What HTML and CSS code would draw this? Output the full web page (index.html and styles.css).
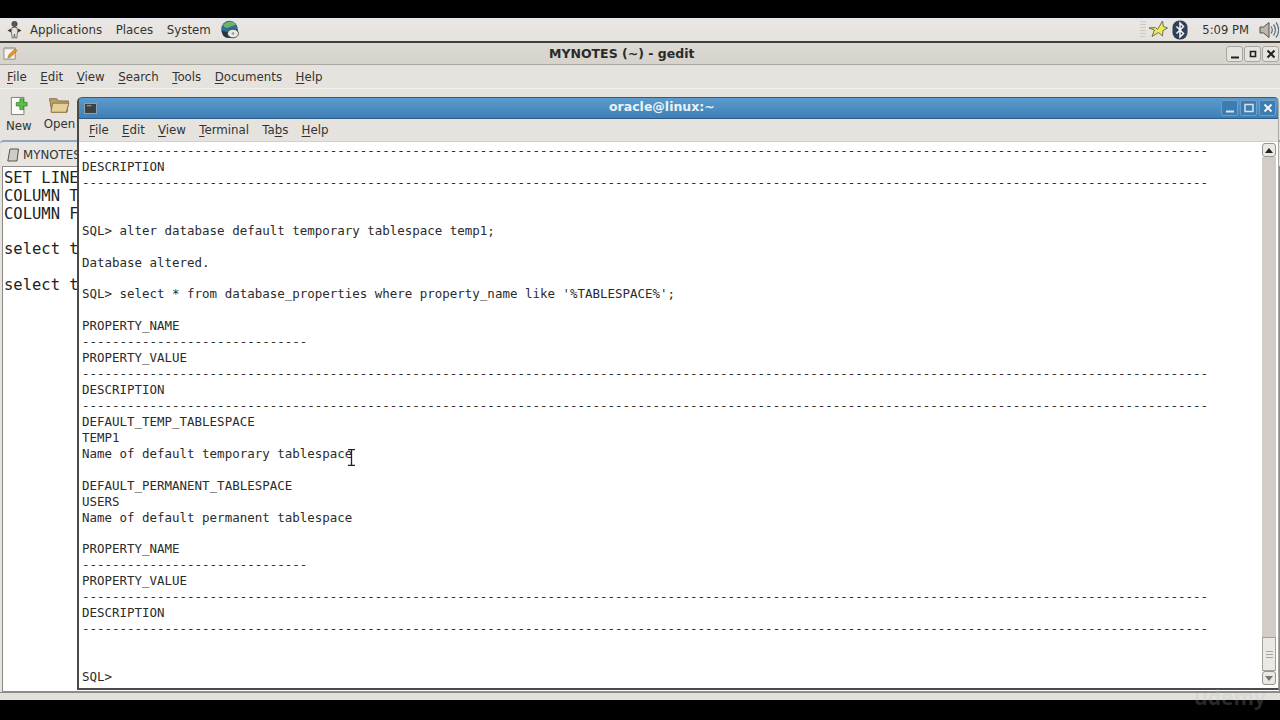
FILE: index.html
```html
<!DOCTYPE html>
<html lang="en">
<head>
<meta charset="utf-8">
<title>MYNOTES (~) - gedit</title>
<link rel="stylesheet" href="styles.css">
</head>
<body>
<div class="screen">
  <div class="letterbox-top"></div>
  <header class="panel">
    <svg class="logo" viewBox="0 0 15 18" width="15" height="18"><circle cx="7.500" cy="3" r="2.700" fill="#5a5750" stroke="#2d2c29" stroke-width=".6"/><path d="M5 6.500h5l.6 4-.8 6.500H8.200L7.500 13l-.7 4H5.200l-.8-6.500z" fill="#e4e1da" stroke="#4c4a45" stroke-width=".7"/><path d="M.5 9.500L4 7.500v4zM14.500 9.500L11 7.500v4z" fill="#3d3b37"/></svg>
    <nav class="panel-menu"><span>Applications</span><span>Places</span><span>System</span></nav>
    <svg class="globe" viewBox="0 0 20 20" width="20" height="20"><circle cx="9.500" cy="9" r="8.300" fill="#2f6f93"/><path d="M3 5c3-3.500 9-4.500 13-1.500-1 2.500-4 2-6 3.500C7.500 8.500 4.500 8 3 5z" fill="#6fb26a"/><path d="M1.500 10c4 3 10 3 16-1l.5 3c-1 4-4 6-9 6s-7-3-7.500-8z" fill="#29343b"/><ellipse cx="13" cy="13.500" rx="5.500" ry="4.300" fill="#e8e8e4" stroke="#3a3a3a" stroke-width=".8"/><circle cx="13" cy="13.500" r="1.300" fill="#9a9a96"/></svg>
    <div class="panel-spacer"></div>
    <div class="tray">
      <div class="tray-grip"></div>
      <svg viewBox="0 0 20 20" width="20" height="20"><path d="M14.500 1l.8 5.500 4.200 1.500-4.500 2.500-.5 5.500-4-3.500-6.500 4 2.500-6.500L1 8l6.500-.5 2 2z" fill="#ecec58" stroke="#6f6e4c" stroke-width="1"/></svg>
      <svg class="bt" viewBox="0 0 16 20" width="16" height="20"><rect x=".5" y=".5" width="15" height="19" rx="7" fill="#323f59"/><path d="M4.500 6.500l7 7-3.500 3.500V3l3.500 3.500-7 7" fill="none" stroke="#f4f6fa" stroke-width="1.500"/></svg>
      <span class="clock">5:09 PM</span>
      <svg class="speaker" viewBox="0 0 20 18" width="20" height="18"><path d="M1 6h3.500L10 1.500v15L4.500 12H1z" fill="#b9b7ae" stroke="#55534e" stroke-width="1"/><path d="M12 5.500c1.500 2 1.500 5 0 7M14.500 3.500c2.500 3 2.500 8 0 11M17 1.500c3.500 4 3.500 11 0 15" fill="none" stroke="#5d6c80" stroke-width="1.200"/></svg>
    </div>
  </header>
  <main class="desktop">
    <section class="gedit">
      <div class="gedit-title">
        <svg class="gedit-icon" viewBox="0 0 16 16" width="15" height="15"><path d="M1 2h12v12H1z" fill="#f7f5ec" stroke="#8a8880"/><path d="M1 1.500h12v2H1z" fill="#b4b2ac"/><path d="M5 13l1.500-4L13 3l2 2-6.500 6.500z" fill="#e8962a" stroke="#8a5a16" stroke-width=".5"/></svg>
        <h1>MYNOTES (~) - gedit</h1>
        <div class="win-buttons plain">
          <span class="wbtn"><svg viewBox="0 0 10 10" width="10" height="10"><path d="M1 8.500h8" stroke="#222" stroke-width="2"/></svg></span>
          <span class="wbtn"><svg viewBox="0 0 10 10" width="10" height="10"><path d="M2.500 2.500h5v5h-5z" fill="none" stroke="#222" stroke-width="1.600"/></svg></span>
          <span class="wbtn"><svg viewBox="0 0 10 10" width="10" height="10"><path d="M1.500 1.500l7 7M8.500 1.500l-7 7" stroke="#222" stroke-width="2"/></svg></span>
        </div>
      </div>
      <nav class="menubar gedit-menu">
        <span><u>F</u>ile</span><span><u>E</u>dit</span><span><u>V</u>iew</span><span><u>S</u>earch</span><span><u>T</u>ools</span><span><u>D</u>ocuments</span><span><u>H</u>elp</span>
      </nav>
      <div class="toolbar">
        <div class="tool"><svg viewBox="0 0 20 22" width="18" height="20"><path d="M1.500 1.500h14v19h-14z" fill="#fbfbf8" stroke="#77756d"/><path d="M11 3h4v4h4v4h-4v4h-4v-4H7V7h4z" fill="#57c24a" stroke="#2d7a22" stroke-width=".8"/></svg><span>New</span></div>
        <div class="tool"><svg viewBox="0 0 24 20" width="22" height="18"><path d="M1.500 3h8l2 2.500h11L21 18H4z" fill="#b99f67" stroke="#7d6c48"/><path d="M5 8h18l-3 10H3z" fill="#e6cf97" stroke="#8a7446"/></svg><span>Open</span></div>
      </div>
      <div class="tabs"><div class="tab"><svg viewBox="0 0 12 14" width="12" height="14"><path d="M3 1h8.500l-1.500 12H.8z" fill="#cfcdc6" stroke="#55534d"/></svg><span>MYNOTES</span></div></div>
      <pre class="doc">SET LINE
COLUMN T
COLUMN F

select t

select t</pre>
    </section>

    <section class="terminal">
      <div class="term-title">
        <svg class="term-icon" viewBox="0 0 14 12" width="13" height="11"><rect x=".5" y=".5" width="13" height="11" fill="#3e4142" stroke="#9aa6ae"/><path d="M3 3h5" stroke="#9c9" stroke-width="1"/></svg>
        <h2>oracle@linux:~</h2>
        <div class="win-buttons blue">
          <span class="wbtn"><svg viewBox="0 0 10 10" width="10" height="10"><path d="M1 8.500h8" stroke="#d6e4f0" stroke-width="2"/></svg></span>
          <span class="wbtn"><svg viewBox="0 0 10 10" width="10" height="10"><path d="M1 1.500h8v7H1z" fill="none" stroke="#d6e4f0" stroke-width="1.500"/></svg></span>
          <span class="wbtn"><svg viewBox="0 0 10 10" width="10" height="10"><path d="M1.500 1.500l7 7M8.500 1.500l-7 7" stroke="#eef4f9" stroke-width="2"/></svg></span>
        </div>
      </div>
      <nav class="menubar term-menu">
        <span><u>F</u>ile</span><span><u>E</u>dit</span><span><u>V</u>iew</span><span><u>T</u>erminal</span><span>Ta<u>b</u>s</span><span><u>H</u>elp</span>
      </nav>
      <div class="term-body">
        <pre class="term-text">------------------------------------------------------------------------------------------------------------------------------------------------------
DESCRIPTION
------------------------------------------------------------------------------------------------------------------------------------------------------


SQL&gt; alter database default temporary tablespace temp1;

Database altered.

SQL&gt; select * from database_properties where property_name like '%TABLESPACE%';

PROPERTY_NAME
------------------------------
PROPERTY_VALUE
------------------------------------------------------------------------------------------------------------------------------------------------------
DESCRIPTION
------------------------------------------------------------------------------------------------------------------------------------------------------
DEFAULT_TEMP_TABLESPACE
TEMP1
Name of default temporary tablespace

DEFAULT_PERMANENT_TABLESPACE
USERS
Name of default permanent tablespace

PROPERTY_NAME
------------------------------
PROPERTY_VALUE
------------------------------------------------------------------------------------------------------------------------------------------------------
DESCRIPTION
------------------------------------------------------------------------------------------------------------------------------------------------------


SQL&gt;</pre>
        <div class="scrollbar">
          <div class="sb-btn"><svg viewBox="0 0 8 5" width="8" height="5"><path d="M0 5l4-5 4 5z" fill="#222"/></svg></div>
          <div class="sb-trough"></div>
          <div class="sb-thumb"><i></i><i></i><i></i></div>
          <div class="sb-btn"><svg viewBox="0 0 8 5" width="8" height="5"><path d="M0 0l4 5 4-5z" fill="#777"/></svg></div>
        </div>
      </div>
      <svg class="ibeam" viewBox="0 0 9 17" width="9" height="17"><path d="M1 .5h7M1 16.500h7M4.500 1v15" stroke="#222" stroke-width="1.300" fill="none"/></svg>
    </section>
  </main>
  <div class="letterbox-bottom"><span class="watermark">udemy</span></div>
</div>
</body>
</html>
```

FILE: styles.css
```css
* { box-sizing: border-box; }
html, body { margin: 0; padding: 0; background: #000; }
body { width: 1280px; height: 720px; overflow: hidden; font-family: "DejaVu Sans", sans-serif; color: #2e3436; }
h1, h2, pre { margin: 0; }
.screen { width: 1280px; height: 720px; display: flex; flex-direction: column; position: relative; }
.letterbox-top { height: 18px; background: #000; flex: none; }

.panel { height: 25px; flex: none; display: flex; align-items: center; padding: 0 0 0 7px; background: linear-gradient(#dfe4ee 0, #e9e6e3 3px, #e6e3de 100%); border-bottom: 2px solid #3f3f3d; font-size: 11.8px; }
.panel-menu { display: flex; gap: 13.6px; margin-left: 8px; color: #333; }
.globe { margin-left: 9px; }
.panel-spacer { flex: 1; }
.tray { display: flex; align-items: center; height: 100%; }
.tray-grip { width: 6px; height: 18px; margin-right: 2px; background: repeating-linear-gradient(#cfccc4 0 1px, #e6e3de 1px 3px); }
.tray .bt { margin-left: 4px; }
.clock { margin: 0 10px 0 14px; font-size: 11.6px; color: #333; }
.speaker { margin-right: 1px; }

.desktop { flex: 1; position: relative; background: #e4e1dc; }

.gedit { position: absolute; inset: 0 0 7px 0; display: flex; flex-direction: column; background: #e6e3de; border-bottom: 1px solid #8c8a84; }
.gedit-title { height: 22px; flex: none; display: flex; align-items: center; padding: 0 1px 0 3px; position: relative; background: linear-gradient(#dcd9d3, #d6d3cc); border-bottom: 1px solid #aaa8a2; }
.gedit-title h1 { position: absolute; left: 549px; top: 3px; font-size: 12.5px; line-height: 16px; font-weight: 700; color: #2a2a2a; }
.win-buttons { margin-left: auto; display: flex; gap: 1px; }
.wbtn { display: flex; align-items: center; justify-content: center; }
.plain .wbtn { width: 17px; height: 16px; border: 1px solid #a9a69f; border-radius: 3px; background: #e7e4df; }
.blue { gap: 2px; }
.blue .wbtn { width: 17px; height: 16px; border: 1px solid #6f9fc8; border-radius: 2px; background: #3d7cb0; }

.menubar { display: flex; align-items: center; font-size: 11.8px; color: #333; }
.menubar u { text-decoration-thickness: 1px; text-underline-offset: 2px; }
.gedit-menu { height: 24px; flex: none; padding-left: 7px; gap: 13.5px; border-bottom: 1px solid #f2f0ed; }

.toolbar { height: 51px; flex: none; display: flex; gap: 12px; padding: 7px 0 0 6px; }
.tool { display: flex; flex-direction: column; align-items: center; gap: 3px; font-size: 11.8px; color: #333; }
.tabs { height: 26px; flex: none; padding: 1px 0 0 2px; border-top: 2px solid #8fa9c2; border-radius: 4px 0 0 0; }
.tab { display: flex; align-items: center; gap: 4px; height: 23px; padding-left: 5px; font-size: 11.8px; background: #e9e6e2; }
.doc { flex: 1; margin: 0 0 0 2px; padding: 3px 0 0 1px; background: #fff; border: 1px solid #8d8b85; font: 15.5px/17.8px "DejaVu Sans Mono", monospace; color: #222; overflow: hidden; }

.terminal { position: absolute; left: 77px; top: 54px; width: 1202px; height: 593px; display: flex; flex-direction: column; background: #fff; border-left: 2px solid #4a4a4a; border-right: 1px solid #a9a7a1; border-bottom: 2px solid #4a4a4a; border-radius: 5px 5px 0 0; }
.term-title { height: 22px; flex: none; display: flex; align-items: center; padding: 0 2px 0 5px; position: relative; background: linear-gradient(#5c9bcd, #3f7fb5); border-top: 1px solid #2b5e8c; border-bottom: 1px solid #2a5c88; border-radius: 4px 4px 0 0; }
.term-title h2 { position: absolute; left: 530px; top: 1px; font-size: 12.5px; line-height: 16px; font-weight: 700; color: #eaf1f7; }
.term-menu { height: 23px; flex: none; padding-left: 10px; gap: 13.2px; background: #e6e3de; border-bottom: 1px solid #d4d1cb; }

.term-body { flex: 1; display: flex; min-height: 0; padding-left: 3px; }
.term-text { flex: 1; font: 12.47px/15.94px "DejaVu Sans Mono", monospace; color: #2b2b2b; padding-top: 1px; overflow: hidden; }
.scrollbar { width: 14px; margin: 1px 2px 3px 0; display: flex; flex-direction: column; flex: none; }
.sb-btn { height: 14px; flex: none; display: flex; align-items: center; justify-content: center; background: #ece9e5; border: 1px solid #96948d; border-radius: 3px; }
.sb-trough { flex: 1; background: #d1cdc6; }
.sb-thumb { height: 34px; flex: none; display: flex; flex-direction: column; align-items: center; justify-content: center; gap: 2px; background: #ece9e5; border: 1px solid #a3a19a; }
.sb-thumb i { display: block; width: 7px; height: 1px; background: #a8a69f; }
.ibeam { position: absolute; left: 268px; top: 352px; }

.letterbox-bottom { height: 20px; flex: none; position: relative; background: #000; }
.watermark { position: absolute; left: 1194px; top: -15px; font: 700 21px/24px "Open Sans", sans-serif; color: rgba(190, 190, 190, .22); }
```
